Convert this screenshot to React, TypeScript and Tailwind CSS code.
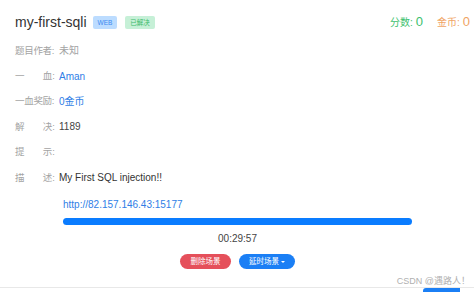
import * as React from "react";

const font = { fontFamily: '"Liberation Sans", "Noto Sans CJK SC", sans-serif' };

type RowProps = { label: React.ReactNode; children?: React.ReactNode };

const Row: React.FC<RowProps> = ({ label, children }) => {
  return (
    <div className="flex h-[25.4px] items-center whitespace-nowrap text-[10px]">
      <div className="flex w-[40px] justify-between text-[9.5px] text-[#a3a3a3]">{label}</div>
      <div className="ml-[4px]">{children}</div>
    </div>
  );
};

export default function App() {
  return (
    <div className="relative flex h-[292px] w-[474px] flex-col overflow-hidden bg-white" style={font}>
      <div className="mt-[6px] flex h-[32px] items-center justify-between pl-[15px] pr-[4px]">
        <div className="flex items-center">
          <span className="text-[14px] text-[#333]">my-first-sqli</span>
          <span className="ml-[6px] rounded-[2px] bg-[#bcdcff] px-[5px] py-[2px] text-[6.5px] leading-[9px] text-[#3b8bf0]">
            WEB
          </span>
          <span className="ml-[8px] rounded-[2px] bg-[#c6f0d7] px-[5px] py-[2px] text-[6.5px] leading-[9px] text-[#3dbb6c]">
            已解决
          </span>
        </div>
        <div className="flex items-baseline">
          <span className="text-[10px] text-[#3dbf6e]">分数:</span>
          <span className="ml-[3px] text-[13px] text-[#3dbf6e]">0</span>
          <span className="ml-[14px] text-[10px] text-[#f0a463]">金币:</span>
          <span className="ml-[3px] text-[13px] text-[#f0a463]">0</span>
        </div>
      </div>

      <div className="flex flex-col pl-[15px]">
        <Row label={<span className="tracking-[-0.3px]">题目作者:</span>}>
          <span className="text-[#a3a3a3]">未知</span>
        </Row>
        <Row label={<><span>一</span><span>血:</span></>}>
          <span className="text-[#2f7ee6]">Aman</span>
        </Row>
        <Row label={<span className="tracking-[-0.3px]">一血奖励:</span>}>
          <span className="text-[#2f7ee6]">0金币</span>
        </Row>
        <Row label={<><span>解</span><span>决:</span></>}>
          <span className="text-[#444]">1189</span>
        </Row>
        <Row label={<><span>提</span><span>示:</span></>} />
        <Row label={<><span>描</span><span>述:</span></>}>
          <span className="text-[#333]">My First SQL injection!!</span>
        </Row>
      </div>

      <div className="mt-[7px] flex flex-col pl-[63px] pr-[62px]">
        <span className="text-[10px] text-[#2f7ee6]">http://82.157.146.43:15177</span>
        <div className="mt-[6px] h-[7px] w-full rounded-full bg-[#0a7cff]" />
        <div className="mt-[6px] text-center text-[10px] text-[#444]">00:29:57</div>
        <div className="mt-[8px] flex justify-center gap-[8px]">
          <button className="h-[15px] w-[51px] rounded-full bg-[#e5505b] text-[7.5px] text-white">删除场景</button>
          <button className="flex h-[15px] w-[56px] items-center justify-center gap-[2px] rounded-full bg-[#1b7ff5] text-[7.5px] text-white">
            延时场景
            <span className="border-x-[2px] border-t-[2.5px] border-x-transparent border-t-white" />
          </button>
        </div>
      </div>

      <div className="mt-auto flex h-[5px] border-t border-[#e8e8e8]">
        <div className="ml-[423px] h-full w-[37px] rounded-tl-[3px] bg-[#1b7ff5]" />
      </div>

      <span className="absolute bottom-[4px] right-[4px] text-[9px] text-[#b0b0b0]">CSDN @遇路人！</span>
    </div>
  );
}
